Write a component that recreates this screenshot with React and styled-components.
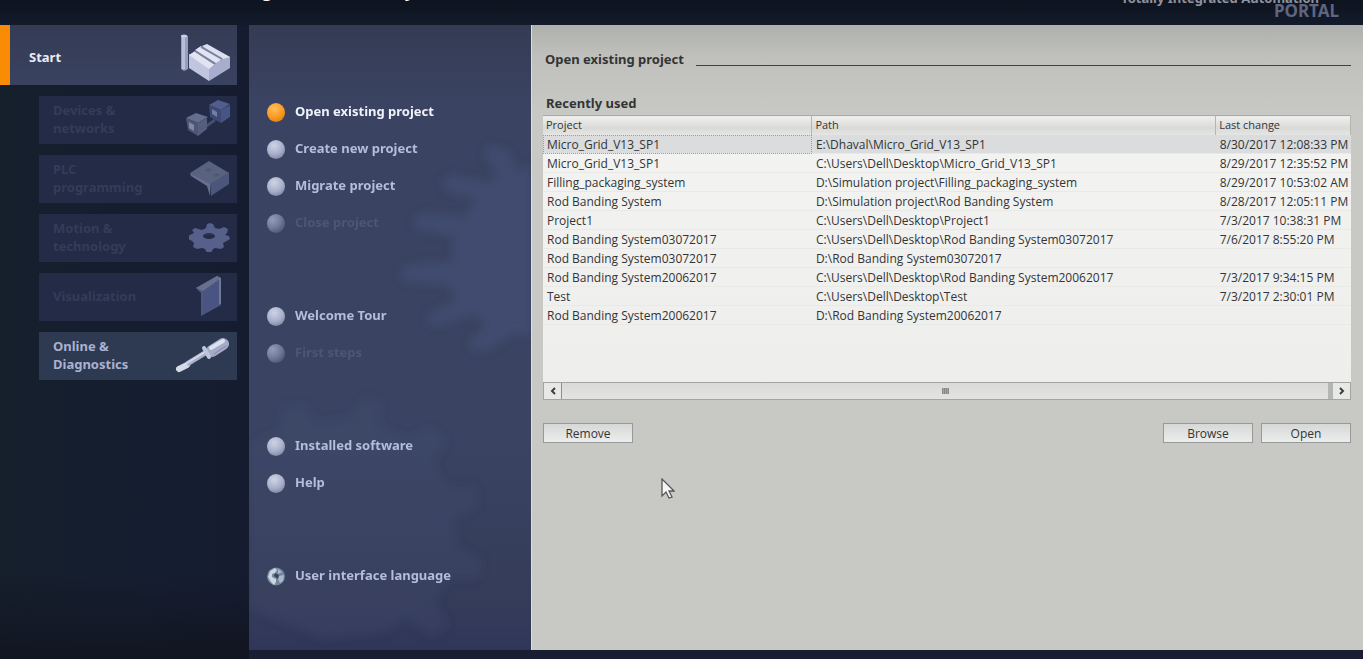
import React, { useState } from "react";
import styled, { createGlobalStyle, css } from "styled-components";

const GlobalStyle = createGlobalStyle`
  * { box-sizing: border-box; }
  body { margin: 0; background: #141b2b; }
  button { font: inherit; color: inherit; border: 0; padding: 0; background: none; cursor: pointer; }
`;

const Page = styled.div`
  height: 100vh;
  display: flex;
  flex-direction: column;
  overflow: hidden;
  position: relative;
  background: #151d2c;
  font-family: "Noto Sans", "Open Sans", sans-serif;
`;

/* HEADER */
const Header = styled.header`
  flex: none;
  height: 25px;
  padding-right: 24px;
  display: flex;
  flex-direction: column;
  align-items: flex-end;
  justify-content: flex-end;
  overflow: hidden;
  position: relative;
  background: linear-gradient(#0d141f, #131a2a);
  font-weight: 700;
`;

const Suite = styled.span`
  margin-right: 20px;
  margin-bottom: -5px;
  font-size: 13px;
  line-height: 14px;
  color: #8f929f;
`;

const Brand = styled.span`
  flex: none;
  height: 25px;
  font-size: 17px;
  line-height: 22px;
  color: #5f647f;
`;

const Caption = styled.div`
  position: absolute;
  left: 262px;
  top: -20px;
  display: flex;
  gap: 132px;
  font-size: 17px;
  line-height: 22px;
  color: #ffffff;
`;

const Body = styled.div`
  flex: 1;
  min-height: 0;
  display: grid;
  grid-template-columns: 249px 282px minmax(0, 1fr);
`;

const Footer = styled.footer`
  flex: none;
  height: 9px;
  background: linear-gradient(90deg, #121623 249px, #191e33 249px);
`;

/* PORTAL NAVIGATION */
const PortalNav = styled.nav`
  display: flex;
  flex-direction: column;
  align-items: flex-end;
  gap: 11px;
  padding-right: 12px;
  background:
    linear-gradient(transparent 88%, #121623),
    linear-gradient(90deg, #161f2c, #151e30 60%, #151c30);
`;

const PortalButton = styled.button`
  width: 198px;
  height: 48px;
  padding: 0 6px 2px 14px;
  display: flex;
  align-items: center;
  justify-content: space-between;
  text-align: left;
  font-size: 13px;
  font-weight: 700;
  line-height: 18px;
  background: #2e3952;
  color: #a9b2d0;

  &:disabled {
    background: #232b46;
    color: #343c59;
    cursor: default;
  }

  ${({ $current }) => $current && css`
    width: 237px;
    height: 60px;
    padding: 4px 6px 0 19px;
    border-left: 10px solid #fa8b05;
    background: linear-gradient(#343b55, #39425f);
    color: #e9ecf6;
  `}
`;

const PortalLabel = styled.span`
  max-width: 100px;
`;

/* TASK LIST */
const TaskPanel = styled.section`
  position: relative;
  overflow: hidden;
  padding: 68px 18px 0;
  display: flex;
  flex-direction: column;
  gap: 56px;
  background: linear-gradient(#343b54, #3a4361 12%, #3a4462 65%, #343c59 92%, #30365a);
`;

const GearBackdrop = styled.svg`
  position: absolute;
  inset: 0;
  width: 100%;
  height: 100%;
`;

const TaskGroup = styled.div`
  position: relative;
  display: flex;
  flex-direction: column;
`;

const TaskButton = styled.button`
  height: 37px;
  padding-bottom: 2px;
  display: flex;
  align-items: center;
  gap: 10px;
  font-size: 13px;
  font-weight: 700;
  line-height: 18px;
  color: ${({ $active }) => ($active ? "#f1f3fb" : "#b5bddc")};

  &:disabled { color: #4d5674; cursor: default; }

  svg { margin-top: 3px; }
`;

const Ball = styled.span`
  width: 18px;
  height: 19px;
  margin-top: 3px;
  border-radius: 50%;
  background: ${({ $tone }) => ({
    orange: "radial-gradient(circle at 40% 30%, #ffc061, #fc9a20 50%, #c87512 100%)",
    grey: "radial-gradient(circle at 40% 30%, #ced4e6, #a9afc9 50%, #667090 100%)",
    dim: "radial-gradient(circle at 30% 30%, #949cb9, #737b99 45%, #434c6b 90%)",
  })[$tone]};
`;

/* PROJECT PANEL */
const ProjectPanel = styled.main`
  min-width: 0;
  padding: 25px 12px 0 11px;
  border-left: 1px solid #d9dde5;
  background: linear-gradient(#aeb0ad, #bfc0bc 30px, #c8c9c4 90px, #c8c9c4);
  color: #333436;
`;

const PanelHeading = styled.div`
  display: flex;
  align-items: center;
  gap: 12px;
  padding-left: 2px;

  &::after {
    content: "";
    flex: 1;
    height: 1px;
    margin-top: 13px;
    background: #3f4143;
  }
`;

const Title = styled.h1`
  margin: 0;
  font-size: 13px;
  line-height: 18px;
`;

const Subtitle = styled.h2`
  margin: 26px 0 3px 3px;
  font-size: 13px;
  line-height: 18px;
`;

const ListBox = styled.div`
  height: 267px;
  overflow: hidden;
  background: linear-gradient(#f3f4f2, #eeeeec);
`;

const ProjectTable = styled.table`
  width: 100%;
  table-layout: fixed;
  border-collapse: collapse;
  font-family: "Open Sans", "Noto Sans", sans-serif;
  font-size: 12px;
  line-height: 17px;
  text-align: left;

  th, td {
    height: 19px;
    padding: 1px 0 0 4px;
    white-space: nowrap;
    overflow: hidden;
  }

  th {
    padding: 0 0 0 3px;
    border-right: 1px solid #b3b5b3;
    border-top: 1px solid #a9aba9;
    background: linear-gradient(#f0f0ee, #d9dad7 60%, #e6e7e4);
    font-size: 11px;
    font-weight: 400;
    line-height: 18px;
  }
`;

const Row = styled.tr`
  border-bottom: 1px solid #e9e9e6;
  ${({ $selected }) => $selected && css`
    background: #dadcdd;
    td:first-child { outline: 1px dotted #9b9d9f; outline-offset: -1px; }
  `}
`;

const ScrollBar = styled.div`
  display: flex;
  height: 18px;
  border: 1px solid #a3a5a3;
  background: #b4b6b4;
`;

const ScrollArrow = styled.button`
  width: 17px;
  display: grid;
  place-items: center;
  background: #e8e9e7;
`;

const Thumb = styled.div`
  flex: 1;
  margin-right: 5px;
  display: grid;
  place-items: center;
  border-left: 1px solid #8d8f8e;
  background: linear-gradient(#dadbd9, #e3e4e2);
`;

const Grip = styled.span`
  width: 7px;
  height: 6px;
  background: repeating-linear-gradient(90deg, #858786 0 1px, #a4a6a4 1px 2px);
`;

const Actions = styled.div`
  display: flex;
  gap: 8px;
  margin-top: 23px;
`;

const ActionButton = styled.button`
  width: 90px;
  height: 20px;
  padding-top: 1px;
  border: 1px solid #969998;
  background: linear-gradient(#d6d8d7, #eceeed);
  font-family: "Open Sans", "Noto Sans", sans-serif;
  font-size: 12px;
  line-height: 17px;
  ${({ $push }) => $push && "margin-right: auto;"}
`;

const Pointer = styled.svg`
  position: absolute;
  left: 661px;
  top: 478px;
  pointer-events: none;
`;

function FactoryIcon() {
  return (
    <svg width="51" height="47" viewBox="0 0 51 47" aria-hidden="true">
      <path d="M1 2l3-1 4 1v33l-4 2-3-2z" fill="#969dbd" />
      <path d="M2 3h3v32H2z" fill="#b9bed8" />
      <ellipse cx="4" cy="2" rx="3" ry="1.5" fill="#c9cee2" />
      <path d="M9 21L27 11l23 12-21 13z" fill="#7f87a8" />
      <path d="M9 20l20 14v13L9 34z" fill="#c0c6e0" />
      <path d="M29 34l6-4 1-3 6-1 1-4 7 1v11L29 47z" fill="#a7aecd" />
      <path d="M9 21l6-4 20 13-6 5z" fill="#e2e5f1" />
      <path d="M15 16l6-4 21 13-6 4z" fill="#e2e5f1" />
      <path d="M22 12l5-2 23 13-7 2z" fill="#dde1ef" />
      <path d="M15 17l20 13M21 13l21 12" stroke="#7a82a3" strokeWidth="2" />
    </svg>
  );
}

function DevicesIcon() {
  return (
    <svg width="46" height="40" viewBox="0 0 46 40" aria-hidden="true">
      <path d="M20 28l10-7" stroke="#454f70" strokeWidth="3" />
      <path d="M1 19l10-5 12 4-10 6z" fill="#666e8e" />
      <path d="M1 19l12 5v13L3 31z" fill="#4d5675" />
      <path d="M13 24l9-5v11l-9 7z" fill="#555e7d" />
      <path d="M4 23l5 3v6l-5-3z" fill="#8189a4" />
      <path d="M24 6l9-5 12 4-9 6z" fill="#515e8c" />
      <path d="M24 6l12 5v13l-11-6z" fill="#3d4974" />
      <path d="M36 11l9-5v12l-9 6z" fill="#485583" />
      <path d="M27 10l5 3v5l-5-3z" fill="#737ea5" />
    </svg>
  );
}

function PlcIcon() {
  return (
    <svg width="42" height="38" viewBox="0 0 42 38" aria-hidden="true">
      <path d="M1 14L20 2l20 12-19 12z" fill="#59627f" />
      <path d="M21 25l19-12v12L22 37z" fill="#4b567b" />
      <path d="M1 14l20 11v12l-3-10L2 17z" fill="#66708f" />
      <path d="M16 11l4-2 3 2-4 2zM24 16l4-2 3 2-4 2z" fill="#4e5877" />
    </svg>
  );
}

function MotionIcon() {
  return (
    <svg width="42" height="30" viewBox="0 0 42 30" aria-hidden="true">
      <path
        fillRule="evenodd"
        fill="#56608a"
        d="M13 8l4-2 1-4 3-1 3 1 2 4 4 1 5-2 4 2-1 4-2 2 4 1 1 3-5 3-2 1 1 4-3 2-6-1-2 1-2 4h-4l-2-4-3-1-5 1-4-2 1-4-2-2-4-2 0-3 4-2 2-1-2-3 3-2zM14 14a6 3 0 1 0 12 0a6 3 0 1 0-12 0z"
      />
      <path d="M14 14q6-6 12 0-6-3-12 0z" fill="#303954" />
    </svg>
  );
}

function VisualizationIcon() {
  return (
    <svg width="36" height="42" viewBox="0 0 36 42" aria-hidden="true">
      <path d="M1 13L22 1l4 2v27L6 41V18z" fill="#4d577f" />
      <path d="M1 13L22 1l4 2L8 16z" fill="#66708f" />
      <path d="M8 17L24 6v23L8 38z" fill="#4a5483" />
      <path d="M25 3v26" stroke="#6f7897" strokeWidth="2" />
    </svg>
  );
}

function ScrewdriverIcon() {
  return (
    <svg width="56" height="38" viewBox="0 0 56 38" aria-hidden="true">
      <g fill="none" strokeLinecap="round">
        <path d="M4 33l8-4" stroke="#d6dbe9" strokeWidth="6" />
        <path d="M12 28l18-11" stroke="#a9b0c9" strokeWidth="5" strokeLinecap="butt" />
        <path d="M12 27l18-11" stroke="#d5d9e8" strokeWidth="2" />
        <path d="M37 15l11-7" stroke="#a3abc6" strokeWidth="12" />
        <path d="M36 12l12-7" stroke="#dde1ee" strokeWidth="4" />
        <path d="M39 18l12-8" stroke="#7f88a8" strokeWidth="1" />
        <path d="M29 12l5 9" stroke="#c0c6da" strokeWidth="4" />
      </g>
    </svg>
  );
}

function GlobeIcon() {
  return (
    <svg width="18" height="19" viewBox="0 0 18 19" aria-hidden="true">
      <circle cx="9" cy="9.5" r="9" fill="#75869f" />
      <path d="M3 4l5-3 2 2-2 3-3 1 0 3 4 2 0 3-2 3-3-3-3-5z" fill="#c9d5df" />
      <path d="M11 2l4 3-4 2zM12 9l5-1-1 6-3 2-2-4z" fill="#aab8c8" />
      <path d="M8 6l4 2-1 4-4-3z" fill="#34465f" />
    </svg>
  );
}

const portals = [
  { label: "Start", Icon: FactoryIcon, current: true },
  { label: "Devices & networks", Icon: DevicesIcon, disabled: true },
  { label: "PLC programming", Icon: PlcIcon, disabled: true },
  { label: "Motion & technology", Icon: MotionIcon, disabled: true },
  { label: "Visualization", Icon: VisualizationIcon, disabled: true },
  { label: "Online & Diagnostics", Icon: ScrewdriverIcon },
];

const taskGroups = [
  [
    { label: "Open existing project", tone: "orange" },
    { label: "Create new project", tone: "grey" },
    { label: "Migrate project", tone: "grey" },
    { label: "Close project", tone: "dim" },
  ],
  [
    { label: "Welcome Tour", tone: "grey" },
    { label: "First steps", tone: "dim" },
  ],
  [
    { label: "Installed software", tone: "grey" },
    { label: "Help", tone: "grey" },
  ],
  [{ label: "User interface language", tone: "globe" }],
];

const projects = [
  ["Micro_Grid_V13_SP1", "E:\\Dhaval\\Micro_Grid_V13_SP1", "8/30/2017 12:08:33 PM"],
  ["Micro_Grid_V13_SP1", "C:\\Users\\Dell\\Desktop\\Micro_Grid_V13_SP1", "8/29/2017 12:35:52 PM"],
  ["Filling_packaging_system", "D:\\Simulation project\\Filling_packaging_system", "8/29/2017 10:53:02 AM"],
  ["Rod Banding System", "D:\\Simulation project\\Rod Banding System", "8/28/2017 12:05:11 PM"],
  ["Project1", "C:\\Users\\Dell\\Desktop\\Project1", "7/3/2017 10:38:31 PM"],
  ["Rod Banding System03072017", "C:\\Users\\Dell\\Desktop\\Rod Banding System03072017", "7/6/2017 8:55:20 PM"],
  ["Rod Banding System03072017", "D:\\Rod Banding System03072017", ""],
  ["Rod Banding System20062017", "C:\\Users\\Dell\\Desktop\\Rod Banding System20062017", "7/3/2017 9:34:15 PM"],
  ["Test", "C:\\Users\\Dell\\Desktop\\Test", "7/3/2017 2:30:01 PM"],
  ["Rod Banding System20062017", "D:\\Rod Banding System20062017", ""],
];

export default function App() {
  const [selected, setSelected] = useState(0);

  return (
    <Page>
      <GlobalStyle />
      <Header>
        <Caption><span>g</span><span>y</span></Caption>
        <Suite>Totally Integrated Automation</Suite>
        <Brand>PORTAL</Brand>
      </Header>

      <Body>
        <PortalNav aria-label="Portals">
          {portals.map(({ label, Icon, current, disabled }) => (
            <PortalButton key={label} $current={current} disabled={disabled}>
              <PortalLabel>{label}</PortalLabel>
              <Icon />
            </PortalButton>
          ))}
        </PortalNav>

        <TaskPanel>
          <GearBackdrop viewBox="0 0 282 625" preserveAspectRatio="xMaxYMin slice" aria-hidden="true">
            <defs>
              <filter id="soft"><feGaussianBlur stdDeviation="4" /></filter>
            </defs>
            <g filter="url(#soft)" fill="#435075">
              <path opacity="0.7" d="M282 140l-14 6-8-20-20-6-5 8 14 22-8 8-38-8-10 6 4 10 30 8-10 18-44-4-8 6 2 10 38 8-2 24-44 4-8 8 4 8 46 4 6 16-26 12-2 10 12 2 36-12 10 14-16 14 2 8 14 2 28-18 17 4z" />
              <path opacity="0.25" d="M0 420l30-14 4-24 22-2 12 18 32-6 14-20 18 4-2 24 28 14 26-12 14 14-14 22 16 24 26 0 4 18-24 14 2 28 26 12-4 20-30 0-14 22 14 24-16 12-26-18-24 14-60 6-74-30z" />
            </g>
          </GearBackdrop>
          {taskGroups.map((group) => (
            <TaskGroup key={group[0].label}>
              {group.map(({ label, tone }) => (
                <TaskButton key={label} $active={tone === "orange"} disabled={tone === "dim"}>
                  {tone === "globe" ? <GlobeIcon /> : <Ball $tone={tone} />}
                  {label}
                </TaskButton>
              ))}
            </TaskGroup>
          ))}
        </TaskPanel>

        <ProjectPanel>
          <PanelHeading>
            <Title>Open existing project</Title>
          </PanelHeading>
          <Subtitle id="recent">Recently used</Subtitle>
          <ListBox>
            <ProjectTable aria-labelledby="recent">
              <colgroup>
                <col width="33.3%" />
                <col width="50%" />
                <col />
              </colgroup>
              <thead>
                <tr>
                  <th>Project</th>
                  <th>Path</th>
                  <th>Last change</th>
                </tr>
              </thead>
              <tbody>
                {projects.map(([name, path, changed], i) => (
                  <Row key={path} $selected={i === selected} onClick={() => setSelected(i)}>
                    <td>{name}</td>
                    <td>{path}</td>
                    <td>{changed}</td>
                  </Row>
                ))}
              </tbody>
            </ProjectTable>
          </ListBox>
          <ScrollBar>
            <ScrollArrow aria-label="Scroll left">
              <svg width="6" height="8" viewBox="0 0 6 8"><path d="M5 1L2 4l3 3" fill="none" stroke="#3c3e40" strokeWidth="2" /></svg>
            </ScrollArrow>
            <Thumb><Grip /></Thumb>
            <ScrollArrow aria-label="Scroll right">
              <svg width="6" height="8" viewBox="0 0 6 8"><path d="M1 1l3 3-3 3" fill="none" stroke="#3c3e40" strokeWidth="2" /></svg>
            </ScrollArrow>
          </ScrollBar>
          <Actions>
            <ActionButton $push>Remove</ActionButton>
            <ActionButton>Browse</ActionButton>
            <ActionButton>Open</ActionButton>
          </Actions>
        </ProjectPanel>
      </Body>
      <Footer />

      <Pointer width="14" height="21" viewBox="0 0 14 21" aria-hidden="true">
        <path d="M1 1v17l4-4 3 6 3-1-3-6h5z" fill="#f6f6f6" stroke="#55585a" strokeWidth="1.3" />
      </Pointer>
    </Page>
  );
}
